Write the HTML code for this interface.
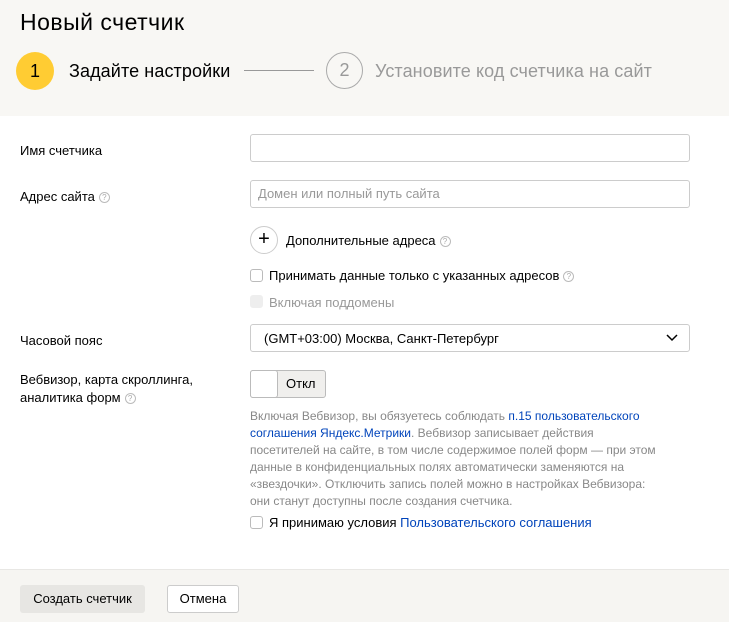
<!DOCTYPE html>
<html><head><meta charset="utf-8"><style>
*{box-sizing:border-box;margin:0;padding:0}
body{width:729px;height:622px;position:relative;background:#fff;font-family:"Liberation Sans",sans-serif;color:#000;overflow:hidden;font-size:13px}
.a{position:absolute;white-space:nowrap}
.hdr{position:absolute;left:0;top:0;width:729px;height:116px;background:#f8f7f4}
.ftr{position:absolute;left:0;top:569px;width:729px;height:53px;background:#f6f5f2;border-top:1px solid #e8e7e4}
.inp{position:absolute;border:1px solid #ccc;border-radius:3px;background:#fff;height:28px}
.q{display:inline-block;width:11px;height:11px;border:1px solid #bbb;border-radius:50%;font-size:8px;line-height:9px;text-align:center;color:#aaa;vertical-align:1px;margin-left:4px}
.cb{position:absolute;width:13px;height:13px;border:1px solid #bbb;border-radius:3px;background:#fff}
.lnk{color:#04b}
</style></head><body>
<div class="hdr"></div>
<div class="a" style="left:20px;top:9px;font-size:23px;letter-spacing:0.5px">Новый счетчик</div>
<div class="a" style="left:16px;top:52px;width:38px;height:38px;border-radius:50%;background:#fc3;text-align:center;line-height:38px;font-size:18px">1</div>
<div class="a" style="left:69px;top:61px;font-size:18px;letter-spacing:0.1px">Задайте настройки</div>
<div class="a" style="left:244px;top:70px;width:70px;height:1px;background:#999"></div>
<div class="a" style="left:326px;top:52px;width:37px;height:37px;border-radius:50%;border:1px solid #aaa;text-align:center;line-height:35px;font-size:18px;color:#999">2</div>
<div class="a" style="left:375px;top:61px;font-size:18px;color:#999;letter-spacing:0.1px">Установите код счетчика на сайт</div>

<div class="a" style="left:20px;top:143px">Имя счетчика</div>
<div class="inp" style="left:250px;top:134px;width:440px"></div>
<div class="a" style="left:20px;top:189px">Адрес сайта<span class="q">?</span></div>
<div class="inp" style="left:250px;top:180px;width:440px"></div>
<div class="a" style="left:258px;top:186px;color:#999">Домен или полный путь сайта</div>

<div class="a" style="left:250px;top:226px;width:28px;height:28px;border:1px solid #ccc;border-radius:50%;text-align:center;line-height:24px;font-size:20px;font-weight:300">+</div>
<div class="a" style="left:286px;top:233px">Дополнительные адреса<span class="q">?</span></div>
<div class="cb" style="left:250px;top:269px"></div>
<div class="a" style="left:269px;top:268px">Принимать данные только с указанных адресов<span class="q">?</span></div>
<div class="cb" style="left:250px;top:295px;background:#eee;border-color:#eee"></div>
<div class="a" style="left:269px;top:295px;color:#999">Включая поддомены</div>

<div class="a" style="left:20px;top:333px">Часовой пояс</div>
<div class="inp" style="left:250px;top:324px;width:440px;height:28px"></div>
<div class="a" style="left:264px;top:331px">(GMT+03:00) Москва, Санкт-Петербург</div>
<svg class="a" style="left:666px;top:334px" width="12" height="8"><path d="M1 1l5 5 5-5" stroke="#000" stroke-width="1.5" fill="none"/></svg>

<div class="a" style="left:20px;top:371px;line-height:18px">Вебвизор, карта скроллинга,<br>аналитика форм<span class="q">?</span></div>
<div class="a" style="left:250px;top:370px;width:76px;height:28px;border:1px solid #bbb;border-radius:3px;background:#f0efed"></div>
<div class="a" style="left:250px;top:370px;width:28px;height:28px;border:1px solid #bbb;border-radius:3px;background:#fff"></div>
<div class="a" style="left:286px;top:376px">Откл</div>

<div class="a" style="left:250px;top:408px;font-size:12px;line-height:17px;color:#888">Включая Вебвизор, вы обязуетесь соблюдать <span class="lnk">п.15 пользовательского</span><br><span class="lnk">соглашения Яндекс.Метрики</span>. Вебвизор записывает действия<br>посетителей на сайте, в том числе содержимое полей форм — при этом<br>данные в конфиденциальных полях автоматически заменяются на<br>«звездочки». Отключить запись полей можно в настройках Вебвизора:<br>они станут доступны после создания счетчика.</div>
<div class="cb" style="left:250px;top:516px"></div>
<div class="a" style="left:269px;top:515px">Я принимаю условия <span class="lnk">Пользовательского соглашения</span></div>

<div class="ftr"></div>
<div class="a" style="left:20px;top:585px;width:125px;height:28px;background:#e7e6e3;border-radius:3px;text-align:center;line-height:28px">Создать счетчик</div>
<div class="a" style="left:167px;top:585px;width:72px;height:28px;border:1px solid #ccc;background:#fff;border-radius:3px;text-align:center;line-height:26px">Отмена</div>
</body></html>
